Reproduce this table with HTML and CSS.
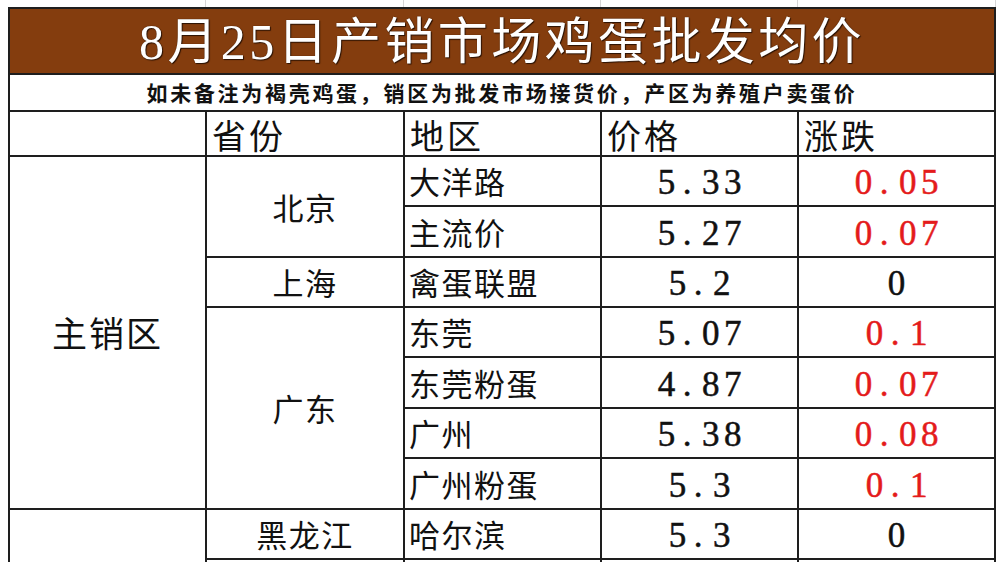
FILE: index.html
```html
<!DOCTYPE html>
<html lang="zh-CN">
<head>
<meta charset="utf-8">
<title>8月25日产销市场鸡蛋批发均价</title>
<link rel="stylesheet" href="styles.css">
</head>
<body>
<div class="topgrid"><span class="g1"></span><span class="g2"></span><span class="g3"></span><span class="g4"></span><span class="g5"></span></div>
<div class="sheet">
  <div class="cell title">8月25日产销市场鸡蛋批发均价</div>
  <div class="cell note">如未备注为褐壳鸡蛋，销区为批发市场接货价，产区为养殖户卖蛋价</div>

  <div class="cell head"></div>
  <div class="cell head">省份</div>
  <div class="cell head">地区</div>
  <div class="cell head">价格</div>
  <div class="cell head">涨跌</div>

  <div class="cell zone span7">主销区</div>
  <div class="cell prov span2">北京</div>
  <div class="cell area">大洋路</div>
  <div class="cell price"><span class="num">5<span class="dot">.</span>33</span></div>
  <div class="cell change up"><span class="num">0<span class="dot">.</span>05</span></div>

  <div class="cell area">主流价</div>
  <div class="cell price"><span class="num">5<span class="dot">.</span>27</span></div>
  <div class="cell change up"><span class="num">0<span class="dot">.</span>07</span></div>

  <div class="cell prov">上海</div>
  <div class="cell area">禽蛋联盟</div>
  <div class="cell price"><span class="num">5<span class="dot">.</span>2</span></div>
  <div class="cell change"><span class="num">0</span></div>

  <div class="cell prov span4">广东</div>
  <div class="cell area">东莞</div>
  <div class="cell price"><span class="num">5<span class="dot">.</span>07</span></div>
  <div class="cell change up"><span class="num">0<span class="dot">.</span>1</span></div>

  <div class="cell area">东莞粉蛋</div>
  <div class="cell price"><span class="num">4<span class="dot">.</span>87</span></div>
  <div class="cell change up"><span class="num">0<span class="dot">.</span>07</span></div>

  <div class="cell area">广州</div>
  <div class="cell price"><span class="num">5<span class="dot">.</span>38</span></div>
  <div class="cell change up"><span class="num">0<span class="dot">.</span>08</span></div>

  <div class="cell area">广州粉蛋</div>
  <div class="cell price"><span class="num">5<span class="dot">.</span>3</span></div>
  <div class="cell change up"><span class="num">0<span class="dot">.</span>1</span></div>

  <div class="cell zone span2"></div>
  <div class="cell prov">黑龙江</div>
  <div class="cell area">哈尔滨</div>
  <div class="cell price"><span class="num">5<span class="dot">.</span>3</span></div>
  <div class="cell change"><span class="num">0</span></div>

  <div class="cell prov"></div>
  <div class="cell area"></div>
  <div class="cell price"></div>
  <div class="cell change"></div>
</div>
</body>
</html>
```
FILE: styles.css
```css
html, body {
  margin: 0;
  padding: 0;
  background: #ffffff;
  overflow: hidden;
}

body {
  width: 1000px;
  height: 562px;
  font-family: "Noto Sans CJK SC", sans-serif;
  color: #111111;
}

.topgrid {
  display: flex;
  height: 7px;
  margin-left: 8px;
}
.topgrid span {
  display: block;
  border-right: 1px solid #d6d6d6;
  box-sizing: border-box;
}
.topgrid .g1 { width: 198px; }
.topgrid .g2 { width: 198px; }
.topgrid .g3 { width: 197px; }
.topgrid .g4 { width: 197px; }
.topgrid .g5 { width: 198px; }

.sheet {
  display: grid;
  grid-template-columns: 197px 198px 197px 197px 197px;
  grid-template-rows: 66px 37px 45px 50px 51px 50px 50px 51px 50px 51px 50px 4px;
  margin-left: 8px;
  width: 988px;
  border-top: 2px solid #1e1e1e;
  border-left: 2px solid #1e1e1e;
  box-sizing: border-box;
}

.cell {
  border-right: 2px solid #1e1e1e;
  border-bottom: 2px solid #1e1e1e;
  box-sizing: border-box;
  display: flex;
  align-items: center;
  white-space: nowrap;
  line-height: 1.15;
}

.title {
  grid-column: span 5;
  background: #843d0e;
  color: #ffffff;
  justify-content: center;
  font-family: "Liberation Serif", "Noto Sans CJK SC", serif;
  font-size: 50px;
  letter-spacing: 3.4px;
  padding-top: 3px;
  text-shadow: 1px 1px 1px #2a1204, 0 0 1px #2a1204;
}

.note {
  grid-column: span 5;
  justify-content: center;
  font-size: 21px;
  font-weight: 700;
  letter-spacing: 2.7px;
}

.head {
  font-size: 34px;
  letter-spacing: 3px;
  padding-left: 5px;
  padding-top: 3px;
}

.zone {
  justify-content: center;
  font-size: 35px;
  letter-spacing: 2px;
}

.prov {
  justify-content: center;
  font-size: 31px;
  letter-spacing: 1.5px;
}

.area {
  font-size: 31px;
  letter-spacing: 1.5px;
  padding-left: 4px;
}

.span7 { grid-row: span 7; }
.span4 { grid-row: span 4; }
.span2 { grid-row: span 2; }

.price, .change {
  justify-content: center;
  padding-top: 5px;
}

.num {
  font-family: "Liberation Serif", serif;
  font-size: 35px;
  letter-spacing: 4.5px;
  padding-left: 4.5px;
  -webkit-text-stroke: 0.5px currentColor;
}

.dot {
  margin-left: 3px;
  margin-right: 6px;
}

.up {
  color: #e41b1b;
}
```
